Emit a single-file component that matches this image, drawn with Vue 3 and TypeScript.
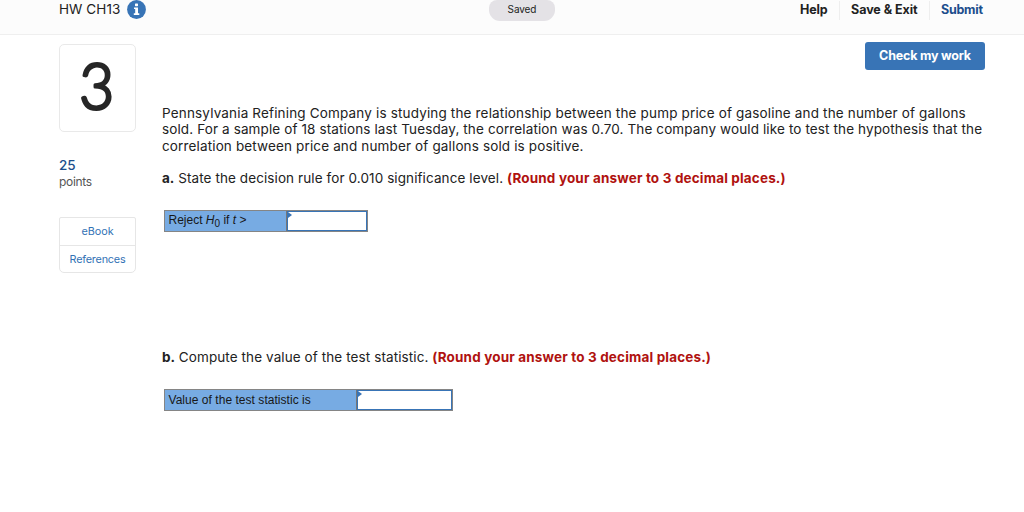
<script setup lang="ts">
const intro: string[] = [
  'Pennsylvania Refining Company is studying the relationship between the pump price of gasoline and the number of gallons',
  'sold. For a sample of 18 stations last Tuesday, the correlation was 0.70. The company would like to test the hypothesis that the',
  'correlation between price and number of gallons sold is positive.',
]
</script>

<template>
  <div class="page">
    <header class="bar">
      <span class="title">HW CH13</span>
      <svg class="info" viewBox="0 0 19 19" aria-hidden="true">
        <circle cx="9.5" cy="9.5" r="9.4" fill="#3874b6" />
        <rect x="8" y="3.5" width="3" height="2.7" rx=".6" fill="#fff" />
        <path d="M7 7.4H11V13.3H12.3V15H6.8V13.3H8.2V9.1H7Z" fill="#fff" />
      </svg>
      <span class="saved"><span>Saved</span></span>
      <nav class="nav">
        <a class="help">Help</a>
        <i class="sep"></i>
        <a class="exit">Save &amp; Exit</a>
        <i class="sep two"></i>
        <a class="submit">Submit</a>
      </nav>
    </header>
    <div class="body">
      <aside class="side">
        <div class="number">
          <svg viewBox="0 0 75 86"><text transform="translate(19.2 64.3) scale(.97 1.02)" x="0" y="0">3</text></svg>
        </div>
        <div class="score">25</div>
        <div class="points">points</div>
        <div class="links">
          <a><span class="ebook">eBook</span></a>
          <a><span class="refs">References</span></a>
        </div>
      </aside>
      <main class="main">
        <div class="actions"><button class="check"><span>Check my work</span></button></div>
        <p class="intro">
          <span v-for="(line, i) in intro" :key="i" class="line" :class="'l' + i">{{ line }}</span>
        </p>
        <p class="question qa"><b class="mark">a.</b> <span class="ask-a">State the decision rule for 0.010 significance level.</span> <b class="hint">(Round your answer to 3 decimal places.)</b></p>
        <div class="answer first">
          <div class="label"><span>Reject <em>H</em><sub>0</sub> if <em>t</em> &gt;</span></div>
          <div class="field"></div>
        </div>
        <p class="question qb"><b class="mark">b.</b> <span class="ask-b">Compute the value of the test statistic.</span> <b class="hint">(Round your answer to 3 decimal places.)</b></p>
        <div class="answer second">
          <div class="label"><span>Value of the test statistic is</span></div>
          <div class="field"></div>
        </div>
      </main>
    </div>
  </div>
</template>

<style>
body { margin: 0; background: #fff; }
</style>

<style scoped>
.page { width: 1024px; height: 512px; overflow: hidden; background: #fff; color: #222; font-family: Inter, "Liberation Sans", sans-serif; }
.page * { box-sizing: border-box; }
.bar { display: flex; height: 35px; padding-left: 59px; background: #fcfcfc; border-bottom: 1px solid #efefef; }
.title { width: 68px; font-size: 13.5px; line-height: 19px; letter-spacing: .08px; white-space: nowrap; }
.info { width: 19px; height: 19px; }
.saved { margin-left: 343px; width: 66px; height: 21px; border-radius: 8px 8px 11px 11px; background: #e4e2e6; text-align: center; font-size: 10px; line-height: 18px; letter-spacing: -.1px; }
.nav { display: flex; margin-left: 245px; font-size: 12.5px; font-weight: 700; line-height: 19px; white-space: nowrap; letter-spacing: -.1px; }
.help { width: 39px; }
.sep { width: 1px; height: 19px; margin-top: 1px; margin-right: 11px; background: #eee; }
.exit { width: 78px; letter-spacing: -.05px; }
.submit { color: #1c4e8c; letter-spacing: -.25px; }
.body { display: flex; }
.side { width: 77px; margin-left: 59px; padding-top: 9px; }
.number { width: 77px; height: 88px; border: 1px solid #e9e9e9; border-radius: 5px; }
.number svg { display: block; width: 75px; height: 86px; }
.number text { font-family: Lato, sans-serif; font-size: 62px; font-weight: 300; fill: #262626; stroke: #262626; stroke-width: 3; stroke-linejoin: round; }
.score { margin-top: 24px; font-size: 13.5px; font-weight: 500; line-height: 18px; color: #1c4e8c; }
.points { font-size: 12px; line-height: 16px; letter-spacing: -.3px; color: #555; }
.links { margin-top: 27px; width: 77px; height: 56px; border: 1px solid #e6e6e6; border-radius: 2px 2px 5px 5px; }
.links a { display: block; height: 27px; text-align: center; font-size: 10.8px; line-height: 27px; color: #3272b5; }
.links a + a { line-height: 27px; border-top: 1px solid #e6e6e6; letter-spacing: -.2px; }
.main { width: 850px; margin-left: 26px; padding-top: 7px; }
.actions { display: flex; height: 28px; padding-left: 703px; }
.check { width: 120px; height: 28px; padding: 0; border: 0; border-radius: 3px; background: #3874b6; color: #fff; font: 700 12.5px/26px Inter, sans-serif; letter-spacing: -.2px; white-space: nowrap; }
.check span { display: block; height: 28px; line-height: 27px; }
.intro { margin: 34.6px 0 0; font-size: 13.5px; line-height: 16.5px; }
.line { display: block; width: max-content; white-space: nowrap; }
.l0 { letter-spacing: .163px; }
.l1 { letter-spacing: .12px; }
.l2 { letter-spacing: .14px; }
.question { margin: 0; font-size: 13.5px; line-height: 18px; white-space: nowrap; width: max-content; }
.ask-a, .ask-b { letter-spacing: .095px; }
.qa { margin-top: 14.9px; }
.qb { margin-top: 116px; }
.hint { color: #b0120f; letter-spacing: .16px; }
.answer { display: flex; height: 22px; margin-left: 2.4px; border: 1px solid #858585; }
.first { width: 204px; margin-top: 23px; }
.second { width: 288.4px; margin-top: 22.6px; }
.label { padding-left: 3.1px; background: #77abe3; font-family: "Liberation Sans", Arial, sans-serif; font-size: 12px; line-height: 18px; color: #181818; white-space: nowrap; border-right: 1px solid #777; }
.second .label { line-height: 21px; letter-spacing: .04px; }
.label sub { font-size: 10px; line-height: 0; vertical-align: -3px; }
.field { position: relative; flex: 1; border: 1px solid #3874b6; background: #fff; }
.field::before { content: ""; position: absolute; left: 0; top: 0; border-left: 4px solid #3874b6; border-top: 3.5px solid transparent; border-bottom: 3.5px solid transparent; }
.first .label { width: 122px; }
.second .label { width: 192px; }
</style>
